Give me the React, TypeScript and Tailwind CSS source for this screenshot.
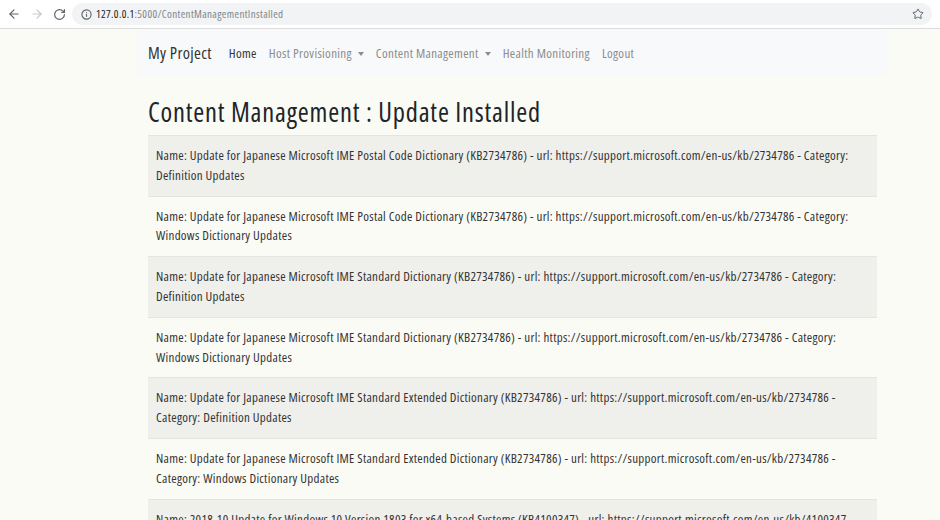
import { ArrowLeft, ArrowRight, RotateCw, Info, Star } from 'lucide-react';

const ROWS = [
  'Name: Update for Japanese Microsoft IME Postal Code Dictionary (KB2734786) - url: https://support.microsoft.com/en-us/kb/2734786 - Category: Definition Updates',
  'Name: Update for Japanese Microsoft IME Postal Code Dictionary (KB2734786) - url: https://support.microsoft.com/en-us/kb/2734786 - Category: Windows Dictionary Updates',
  'Name: Update for Japanese Microsoft IME Standard Dictionary (KB2734786) - url: https://support.microsoft.com/en-us/kb/2734786 - Category: Definition Updates',
  'Name: Update for Japanese Microsoft IME Standard Dictionary (KB2734786) - url: https://support.microsoft.com/en-us/kb/2734786 - Category: Windows Dictionary Updates',
  'Name: Update for Japanese Microsoft IME Standard Extended Dictionary (KB2734786) - url: https://support.microsoft.com/en-us/kb/2734786 - Category: Definition Updates',
  'Name: Update for Japanese Microsoft IME Standard Extended Dictionary (KB2734786) - url: https://support.microsoft.com/en-us/kb/2734786 - Category: Windows Dictionary Updates',
  'Name: 2018-10 Update for Windows 10 Version 1803 for x64-based Systems (KB4100347) - url: https://support.microsoft.com/en-us/kb/4100347 - Category: Updates',
];

export default function App() {
  return (
    <div className="h-[520px] overflow-hidden bg-[#fbfbf6] font-['Open_Sans',sans-serif] font-stretch-condensed">
      {/* browser bar */}
      <div className="flex h-[29px] items-center border-b border-[#dcdcdc] bg-white pl-[7px] pr-[8px]">
        <ArrowLeft className="h-[14px] w-[14px] text-[#5f6368]" strokeWidth={2} />
        <ArrowRight className="ml-[9px] h-[14px] w-[14px] text-[#c4c7ca]" strokeWidth={2} />
        <RotateCw className="ml-[9px] h-[13px] w-[13px] text-[#5f6368]" strokeWidth={2.2} />
        <div className="ml-[6px] flex h-[22px] flex-1 items-center rounded-full bg-[#f1f3f4] pl-[9px] pr-[8px]">
          <Info className="h-[11px] w-[11px] text-[#5f6368]" strokeWidth={2.4} />
          <span className="ml-[4px] text-[11px] tracking-[0.35px] text-[#202124]">
            127.0.0.1<span className="text-[#80868b]">:5000/ContentManagementInstalled</span>
          </span>
          <Star className="ml-auto h-[12px] w-[12px] text-[#5f6368]" strokeWidth={2} />
        </div>
      </div>

      <div className="pl-[137px]">
        {/* navbar */}
        <nav className="flex h-[47px] w-[750px] items-center bg-[#f8f9fa] pl-[11px] pt-[2px]">
          <span className="text-[16.5px] tracking-[0.35px] text-[#333]">My Project</span>
          <div className="ml-[17px] flex items-center gap-[12px] text-[13px] tracking-[0.32px] text-[#8c8c8c]">
            <span className="text-[#333]">Home</span>
            <span className="flex items-center">
              Host Provisioning
              <span className="ml-[6px] inline-block border-x-[3px] border-t-[4px] border-x-transparent border-t-[#8c8c8c]" />
            </span>
            <span className="flex items-center">
              Content Management
              <span className="ml-[6px] inline-block border-x-[3px] border-t-[4px] border-x-transparent border-t-[#8c8c8c]" />
            </span>
            <span>Health Monitoring</span>
            <span>Logout</span>
          </div>
        </nav>

        <div className="w-[740px] pl-[11px]">
          <h1 className="mt-[20px] mb-[7px] text-[26.5px] leading-[32px] tracking-[0.8px] text-[#212529]">
            Content Management : Update Installed
          </h1>
          <div>
            {ROWS.map((row, i) => (
              <div
                key={i}
                className={`border-t border-[#e4e4e0] px-[8px] py-[10px] text-[13px] leading-[19.8px] tracking-[0.28px] text-[#333] ${
                  i % 2 === 0 ? 'bg-[#efefec]' : ''
                }`}
              >
                {row}
              </div>
            ))}
          </div>
        </div>
      </div>
    </div>
  );
}
